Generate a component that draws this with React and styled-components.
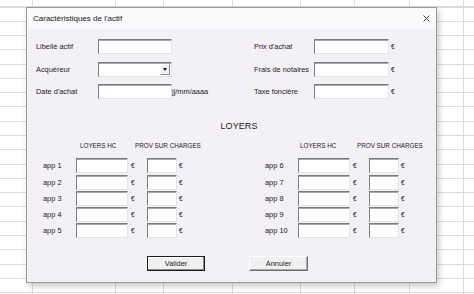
import styled, { createGlobalStyle } from 'styled-components';

const GlobalStyle = createGlobalStyle`
  html, body { margin: 0; padding: 0; }
  body {
    font-family: "Liberation Sans", Arial, sans-serif;
    color: #222;
  }
`;

const gridLine = '#dcdcdc';
const colLines = [32, 115, 163, 232, 300, 354, 409, 463];

const Sheet = styled.div`
  width: 474px;
  height: 294px;
  box-sizing: border-box;
  padding: 7px 0 0 26px;
  overflow: hidden;
  background-color: #fff;
  background-image:
    ${colLines.map(() => `linear-gradient(${gridLine}, ${gridLine})`).join(',')},
    repeating-linear-gradient(to bottom, transparent 0 6.5px, ${gridLine} 6.5px 7.5px, transparent 7.5px 14.28px);
  background-size: ${colLines.map(() => '1px 100%').join(',')}, 100% 100%;
  background-position: ${colLines.map((x) => `${x}px 0`).join(',')}, 0 0;
  background-repeat: no-repeat;
`;

const Dialog = styled.div`
  width: 411px;
  height: 276px;
  box-sizing: border-box;
  border: 1px solid #9a9a9a;
  background: #f3f1f5;
  box-shadow: 2px 3px 6px rgba(0, 0, 0, 0.22);
  display: flex;
  flex-direction: column;
`;

const TitleBar = styled.div`
  height: 21px;
  flex: none;
  display: flex;
  align-items: center;
  justify-content: space-between;
  padding: 0 6px 0 6px;
  background: #f9f8fa;
  font-size: 8px;
  color: #1a1a1a;
`;

const Body = styled.div`
  flex: 1;
  padding: 10px 0 0 9px;
  font-size: 7.4px;
`;

const Top = styled.div`
  display: flex;
`;

const FieldCol = styled.div`
  display: flex;
  flex-direction: column;
  gap: 7.5px;
  width: ${(p) => p.$width || 'auto'};
`;

const FieldRow = styled.div`
  display: flex;
  align-items: center;
  height: 15px;
`;

const Label = styled.span`
  width: ${(p) => p.$width};
  flex: none;
  white-space: nowrap;
`;

const Input = styled.div`
  box-sizing: border-box;
  width: ${(p) => p.$width};
  height: 15px;
  flex: none;
  background: #fff;
  border: 1px solid;
  border-color: #7c7c7c #e4e4e4 #e4e4e4 #7c7c7c;
  box-shadow: inset 0 1px 0 #a9a9a9;
`;

const Combo = styled(Input)`
  display: flex;
  justify-content: flex-end;
  align-items: stretch;
  padding: 1px 1px 1px 0;
`;

const DropButton = styled.div`
  width: 10px;
  box-sizing: border-box;
  background: #f1f1f1;
  border: 1px solid;
  border-color: #fff #8a8a8a #8a8a8a #fff;
  display: flex;
  align-items: center;
  justify-content: center;

  &::after {
    content: '';
    border-left: 2.5px solid transparent;
    border-right: 2.5px solid transparent;
    border-top: 3px solid #111;
  }
`;

const Suffix = styled.span`
  padding-left: ${(p) => p.$pad || '2px'};
  font-size: ${(p) => p.$size || '6.5px'};
  white-space: nowrap;
`;

const Heading = styled.div`
  margin: 21px 0 0 6px;
  text-align: center;
  font-size: 9px;
  line-height: 13px;
  letter-spacing: 0.1px;
`;

const Groups = styled.div`
  display: flex;
  padding-left: 7px;
  margin-top: 8px;
`;

const Group = styled.div`
  width: ${(p) => p.$width || 'auto'};
  display: grid;
  grid-template-columns: 33px 52px 19px 30px 14px;
  grid-template-rows: 16.3px repeat(5, 15px);
  row-gap: 1.2px;
  align-items: center;
`;

const ColHead = styled.span`
  grid-column: ${(p) => p.$col};
  align-self: start;
  margin-left: ${(p) => p.$shift};
  font-size: 6.3px;
  line-height: 9px;
  white-space: nowrap;
`;

const Buttons = styled.div`
  display: flex;
  gap: 44px;
  padding-left: 111px;
  margin-top: 17.5px;
`;

const Button = styled.button`
  box-sizing: border-box;
  width: ${(p) => p.$width};
  height: 15px;
  padding: 0;
  font-family: inherit;
  font-size: 7.4px;
  color: #222;
  background: #f0f0f0;
  border: 1px solid;
  border-color: ${(p) => (p.$default ? '#1e1e1e' : '#fff #6f6f6f #6f6f6f #fff')};
  box-shadow: ${(p) =>
    p.$default ? 'inset -1px -1px 0 #8a8a8a, inset 1px 1px 0 #fff' : 'inset -1px -1px 0 #a8a8a8'};
`;

const CloseIcon = () => (
  <svg width="7" height="7" viewBox="0 0 7 7">
    <path d="M0.5 0.5 L6.5 6.5 M6.5 0.5 L0.5 6.5" stroke="#333" strokeWidth="0.9" />
  </svg>
);

const AppGroup = ({ from, width, headShift }) => (
  <Group $width={width}>
    <ColHead $col="2 / 4" $shift={headShift}>LOYERS HC</ColHead>
    <ColHead $col="4 / 6" $shift="-12px">PROV SUR CHARGES</ColHead>
    {[0, 1, 2, 3, 4].map((i) => (
      <Row key={i} n={from + i} />
    ))}
  </Group>
);

const Row = ({ n }) => (
  <>
    <Label>app {n}</Label>
    <Input $width="52px" />
    <Suffix $pad="3px">€</Suffix>
    <Input $width="30px" />
    <Suffix $pad="2px">€</Suffix>
  </>
);

export default function App() {
  return (
    <Sheet>
      <GlobalStyle />
      <Dialog>
        <TitleBar>
          <span>Caractéristiques de l'actif</span>
          <CloseIcon />
        </TitleBar>
        <Body>
          <Top>
            <FieldCol $width="218px">
              <FieldRow>
                <Label $width="62px">Libellé actif</Label>
                <Input $width="74px" />
              </FieldRow>
              <FieldRow>
                <Label $width="62px">Acquéreur</Label>
                <Combo $width="74px">
                  <DropButton />
                </Combo>
              </FieldRow>
              <FieldRow>
                <Label $width="62px">Date d'achat</Label>
                <Input $width="74px" />
                <Suffix $pad="0" $size="7.4px">jj/mm/aaaa</Suffix>
              </FieldRow>
            </FieldCol>
            <FieldCol>
              <FieldRow>
                <Label $width="60px">Prix d'achat</Label>
                <Input $width="75px" />
                <Suffix>€</Suffix>
              </FieldRow>
              <FieldRow>
                <Label $width="60px">Frais de notaires</Label>
                <Input $width="75px" />
                <Suffix>€</Suffix>
              </FieldRow>
              <FieldRow>
                <Label $width="60px">Taxe foncière</Label>
                <Input $width="75px" />
                <Suffix>€</Suffix>
              </FieldRow>
            </FieldCol>
          </Top>
          <Heading>LOYERS</Heading>
          <Groups>
            <AppGroup from={1} width="222px" headShift="4px" />
            <AppGroup from={6} headShift="2px" />
          </Groups>
          <Buttons>
            <Button $width="58px" $default>Valider</Button>
            <Button $width="59px">Annuler</Button>
          </Buttons>
        </Body>
      </Dialog>
    </Sheet>
  );
}
